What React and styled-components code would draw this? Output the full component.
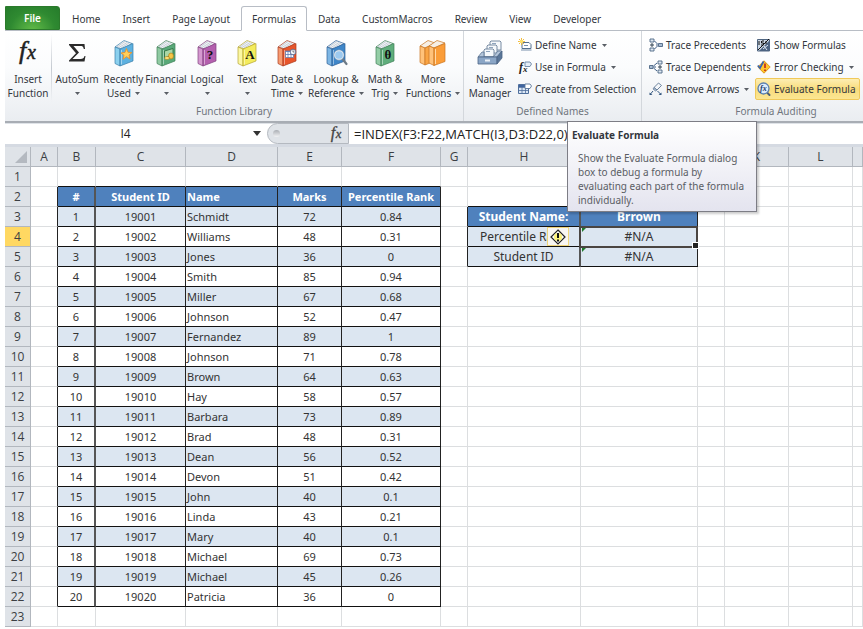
import React, { useState } from "react";
import styled, { createGlobalStyle } from "styled-components";

const TABS = [
  "Home",
  "Insert",
  "Page Layout",
  "Formulas",
  "Data",
  "CustomMacros",
  "Review",
  "View",
  "Developer",
];

const COLUMNS = [
  { name: "A", width: 27 },
  { name: "B", width: 38 },
  { name: "C", width: 90 },
  { name: "D", width: 92 },
  { name: "E", width: 64 },
  { name: "F", width: 99 },
  { name: "G", width: 27 },
  { name: "H", width: 113 },
  { name: "I", width: 117 },
  { name: "J", width: 27 },
  { name: "K", width: 64 },
  { name: "L", width: 64 },
  { name: "", width: null },
];

const STUDENTS = [
  ["Schmidt", 72, 0.84],
  ["Williams", 48, 0.31],
  ["Jones", 36, 0],
  ["Smith", 85, 0.94],
  ["Miller", 67, 0.68],
  ["Johnson", 52, 0.47],
  ["Fernandez", 89, 1],
  ["Johnson", 71, 0.78],
  ["Brown", 64, 0.63],
  ["Hay", 58, 0.57],
  ["Barbara", 73, 0.89],
  ["Brad", 48, 0.31],
  ["Dean", 56, 0.52],
  ["Devon", 51, 0.42],
  ["John", 40, 0.1],
  ["Linda", 43, 0.21],
  ["Mary", 40, 0.1],
  ["Michael", 69, 0.73],
  ["Michael", 45, 0.26],
  ["Patricia", 36, 0],
];

const ROW_COUNT = 23;

// cell values keyed by address
const CELLS = {
  B2: "#",
  C2: "Student ID",
  D2: "Name",
  E2: "Marks",
  F2: "Percentile Rank",
  H3: "Student Name:",
  I3: "Brrown",
  H4: "Percentile Rank",
  I4: "#N/A",
  H5: "Student ID",
  I5: "#N/A",
};
STUDENTS.forEach(([name, marks, rank], i) => {
  const row = i + 3;
  CELLS[`B${row}`] = i + 1;
  CELLS[`C${row}`] = 19001 + i;
  CELLS[`D${row}`] = name;
  CELLS[`E${row}`] = marks;
  CELLS[`F${row}`] = rank;
});

const inList = (col, row) => "BCDEF".includes(col) && row >= 2 && row <= 22;
const inLookup = (col, row) => "HI".includes(col) && row >= 3 && row <= 5;

const getCellStyle = (col, row) => {
  const list = col !== "" && inList(col, row);
  const lookup = col !== "" && inLookup(col, row);
  const head = (list && row === 2) || (lookup && row === 3);
  const band = (list && row % 2 === 1) || (lookup && row > 3);
  return {
    $fill: head ? "#4f81bd" : band ? "#dce6f1" : "#fff",
    $head: head,
    $large: lookup,
    $left: col === "D",
    $double: (col === "B" && list) || (col === "H" && lookup),
    $rightLine:
      list ||
      lookup ||
      (col === "A" && row >= 2 && row <= 22) ||
      (col === "G" && row >= 3 && row <= 5),
    $bottomLine:
      list ||
      lookup ||
      ("BCDEF".includes(col) && col !== "" && row === 1) ||
      ("HI".includes(col) && col !== "" && row === 2),
  };
};

/* ---------- icons ---------- */

const Book = ({ face, side, edge, children }) => (
  <svg width="24" height="28" viewBox="0 0 24 28" aria-hidden="true">
    <path d="M3 8 L12 1.5 L20 4.5 L10 10Z" fill="#f4f6f8" stroke={edge} strokeWidth=".7" />
    <path d="M5 8 L13 2.5 M7 8.5 L15 3.5 M9 9 L17 4" stroke="#aab6c2" strokeWidth=".6" />
    <path d="M3 8 L8 10 L8 27 L3 24.5Z" fill={side} stroke={edge} strokeWidth=".7" strokeLinejoin="round" />
    <path d="M8 10 L21 4.5 L21 22 L8 27Z" fill={face} stroke={edge} strokeWidth=".7" strokeLinejoin="round" />
    <path d="M9.5 11 L9.5 25.5" stroke="#fff" strokeOpacity=".5" strokeWidth=".9" />
    {children}
  </svg>
);

const BookLetter = ({ children }) => (
  <text x="15" y="20" fontSize="13" fontWeight="700" fontFamily="Liberation Serif, serif" textAnchor="middle" fill="#111">
    {children}
  </text>
);

const FxIcon = ({ size = 28, width = 30, color = "#222" }) => (
  <svg width={width} height={size} viewBox="0 0 30 28" aria-hidden="true">
    <text x="6" y="20" fontSize="26" fontStyle="italic" fontFamily="Liberation Serif, serif" fill={color} stroke={color} strokeWidth=".5">
      f
    </text>
    <text x="14" y="20" fontSize="20" fontStyle="italic" fontFamily="Liberation Serif, serif" fill={color} stroke={color} strokeWidth=".5">
      x
    </text>
  </svg>
);

const SigmaIcon = () => (
  <svg width="24" height="28" viewBox="0 0 24 28" aria-hidden="true">
    <path
      d="M4 5H19.500L20 10H18.800C18.300 7.500 17.500 7 15 7H8.500L14 13.500L7.500 20H15.500C18 20 18.800 19.200 19.500 17H20.500L19.500 22.500H4V21.500L11 14.200L4 6Z"
      fill="#2b2b2b"
    />
  </svg>
);

const RecentIcon = () => (
  <Book face="#5db1e0" side="#8bd0ee" edge="#3b7ea9">
    <path d="M14.500 9.500L16 13.300L20 13.500L17 16L18 20L14.500 17.700L11 20.200L12 16.200L9 14L13 13.400Z" fill="#ffcf5a" stroke="#e8922b" strokeWidth=".9" />
  </Book>
);

const FinancialIcon = () => (
  <Book face="#58a978" side="#8fcaa2" edge="#3f7f57">
    <path d="M10.500 12L19 9.500V16L10.500 19Z" fill="#a9d7a5" stroke="#2e7046" strokeWidth=".9" />
    <ellipse cx="17" cy="17" rx="2.500" ry="3" fill="#f6c546" stroke="#a87913" strokeWidth=".6" />
    <ellipse cx="13" cy="19" rx="2.500" ry="1.500" fill="#ffe07a" stroke="#a87913" strokeWidth=".5" />
  </Book>
);

const LogicalIcon = () => (
  <Book face="#b45fae" side="#d598cf" edge="#80417e">
    <BookLetter>?</BookLetter>
  </Book>
);

const TextIcon = () => (
  <Book face="#f4ec5c" side="#fbf7a3" edge="#b5a52e">
    <BookLetter>A</BookLetter>
  </Book>
);

const DateIcon = () => (
  <Book face="#e8552b" side="#f79b72" edge="#a93a1c">
    <path d="M10.500 12H18.500V18.500H10.500Z" fill="#fff" stroke="#6b7fa9" strokeWidth=".8" />
    <path d="M10.500 12.500H18.500M10.500 15.500H18.500M13 12V18.500M16 12V18.500" stroke="#5b78b5" strokeWidth=".8" />
    <circle cx="18" cy="13" r="2.800" fill="#f2f5fb" stroke="#4c5e86" strokeWidth=".8" />
    <path d="M18 11.300V13H19.500" stroke="#333" strokeWidth=".6" fill="none" />
  </Book>
);

const LookupIcon = () => (
  <Book face="#3e86c9" side="#7db6e4" edge="#2c5f95">
    <path d="M18.500 20L22.500 25" stroke="#6d7a86" strokeWidth="2.200" strokeLinecap="round" />
    <circle cx="15" cy="16" r="4.500" fill="#9cc9ef" stroke="#dfe9f2" strokeWidth="1.300" />
    <circle cx="15" cy="16" r="5.200" fill="none" stroke="#6f8ba6" strokeWidth=".5" />
  </Book>
);

const MathIcon = () => (
  <Book face="#5fae7c" side="#93cda6" edge="#3f7f57">
    <BookLetter>θ</BookLetter>
  </Book>
);

const MoreIcon = () => (
  <svg width="30" height="28" viewBox="0 0 30 28" aria-hidden="true">
    <g stroke="#c8741f" strokeWidth=".7" strokeLinejoin="round">
      <path d="M2 7L10 1.500L17 4L7 9Z" fill="#f6efe5" />
      <path d="M2 7L7 9V26L2 23.500Z" fill="#ffc27a" />
      <path d="M7 9L17 4.500V22L7 26Z" fill="#f9a443" />
      <path d="M11 7L19 1.500L27 4L16 9Z" fill="#f6efe5" />
      <path d="M11 7L16 9V26.500L11 24Z" fill="#ffc27a" />
      <path d="M16 9L27 4.500V22.500L16 26.500Z" fill="#fb9d38" />
    </g>
    <path d="M17.500 10V25" stroke="#ffd9a8" />
  </svg>
);

const NameManagerIcon = () => (
  <svg width="26" height="28" viewBox="0 0 26 28" aria-hidden="true">
    <g fill="#f5f8fb" stroke="#6a7f99" strokeWidth=".9" strokeLinejoin="round">
      <path d="M13 3L14 2H23L24 3V11H13Z" />
      <path d="M10 7L11 6H19L20 7V14H10Z" />
      <path d="M7 11L8 10H16L17 11V18H7Z" />
    </g>
    <path d="M15 4.500H19M12 8.500H16M9 12.500H13" stroke="#8ea4bd" />
    <path d="M1 18L5 13H7V18H16L21 12H25L20 18Z" fill="#b3c5da" stroke="#5c7593" strokeWidth=".8" />
    <path d="M1 18H20V25H1Z" fill="#8ba6c6" stroke="#4b6585" strokeWidth=".8" />
    <path d="M20 18L25 12V19L20 25Z" fill="#5a7698" stroke="#4b6585" strokeWidth=".8" />
    <path d="M8 20.500H13V22.500H8Z" fill="#eaf0f7" />
  </svg>
);

const SmallSvg = ({ children }) => (
  <svg width="14" height="14" viewBox="0 0 14 14" fill="none" aria-hidden="true">
    {children}
  </svg>
);

const DefineNameIcon = () => (
  <SmallSvg>
    <path d="M4 4.500H11L13 6.500V10.500H4Z" fill="#fff" stroke="#55708f" />
    <path d="M6 7.500H10M3 12H13.500" stroke="#7890ab" />
    <path d="M3.500 0V7M0 3.500H7M1 1L6 6M6 1L1 6" stroke="#f0b429" strokeWidth=".9" />
    <circle cx="3.500" cy="3.500" r="1.800" fill="#ffe16b" />
  </SmallSvg>
);

const UseFormulaIcon = () => (
  <SmallSvg>
    <path d="M7 2H12L13.500 4L12 6.500H7Z" fill="#e4edf6" stroke="#6b84a3" strokeWidth=".9" />
    <text x="1" y="11" fontSize="12" fontStyle="italic" fontWeight="700" fontFamily="Liberation Serif, serif" fill="#222">
      f
    </text>
    <text x="5" y="12" fontSize="9" fontStyle="italic" fontWeight="700" fontFamily="Liberation Serif, serif" fill="#222">
      x
    </text>
  </SmallSvg>
);

const CreateIcon = () => (
  <SmallSvg>
    <path d="M.5 2.500H10.500V11.500H.5Z" fill="#dbe7f5" stroke="#4f6f9c" />
    <path d="M.5 5.500H10.500M.5 8.500H10.500M4 2.500V11.500M7.500 2.500V11.500" stroke="#4f6f9c" strokeWidth=".8" />
    <path d="M1 3H9V5H1Z" fill="#3e64a0" />
    <path d="M7 2H12L13.500 4L12 6.500H7Z" fill="#fff" stroke="#5a7699" strokeWidth=".9" />
  </SmallSvg>
);

const PrecedentsIcon = () => (
  <SmallSvg>
    <path d="M1 1H5V4H1ZM1 10H5V13H1Z" fill="#dfe8f2" stroke="#4d6785" strokeWidth=".9" />
    <path d="M3 5V9M1 7H5" stroke="#345" />
    <path d="M5.500 3L8.500 6M5.500 11L8.500 8M7 7H9" stroke="#3f5f86" />
    <path d="M9.500 5.500H13.500V8.500H9.500Z" fill="#a9bdd3" stroke="#4d6785" strokeWidth=".9" />
  </SmallSvg>
);

const DependentsIcon = () => (
  <SmallSvg>
    <path d="M.5 5.500H4V8.500H.5Z" fill="#a9bdd3" stroke="#4d6785" strokeWidth=".9" />
    <path d="M4.500 6L8 3M4.500 8L8 11M4.500 7H7" stroke="#3f5f86" />
    <path d="M9 1H13V4H9ZM9 10H13V13H9Z" fill="#dfe8f2" stroke="#4d6785" strokeWidth=".9" />
    <path d="M11 5V9M9 7H13" stroke="#345" />
  </SmallSvg>
);

const RemoveArrowsIcon = () => (
  <SmallSvg>
    <path d="M5 5.500L9.500 1L12.500 3.500L8 8Z" fill="#f3f6fa" stroke="#5e7692" strokeWidth=".9" />
    <path d="M5 5.500L8 8L6.500 9L4 7Z" fill="#a9bdd3" stroke="#5e7692" strokeWidth=".7" />
    <path d="M4 9L1.500 12M8.500 9L11.500 12" stroke="#33567f" />
    <path d="M.5 10.500V13H3.500ZM12.500 10.500V13H9.500Z" fill="#33567f" />
  </SmallSvg>
);

const ShowFormulasIcon = () => (
  <SmallSvg>
    <path d="M.5 1.500H12.500V13H.5Z" fill="#cbd7e4" stroke="#4f6580" />
    <path d="M13 2V13H2Z" fill="#4d6482" />
    <path d="M2 3V7M5 3H7M4.500 3V5H6.500V7H4M9 3V6M1 12L12 1" stroke="#111" strokeWidth="1" />
    <path d="M6 11L11 7M7 8L10 12" stroke="#dfe8f2" strokeWidth="1" />
  </SmallSvg>
);

const ErrorIcon = () => (
  <SmallSvg>
    <path d="M7 .8L13.200 7L7 13.200L.8 7Z" fill="#ffc62b" stroke="#d98e12" strokeWidth=".9" />
    <path d="M8 3.500V8M8 9.500V11" stroke="#c5351c" strokeWidth="1.800" />
    <path d="M.8 5.500L3 8L6.500 1.500" stroke="#3363b5" strokeWidth="1.600" />
  </SmallSvg>
);

const EvaluateIcon = () => (
  <SmallSvg>
    <path d="M9.500 10L12.500 13" stroke="#4f5f73" strokeWidth="2" strokeLinecap="round" />
    <circle cx="6.500" cy="6.500" r="5.500" fill="#dcebfb" stroke="#5b7fae" strokeWidth="1.300" />
    <text x="3" y="9" fontSize="8" fontStyle="italic" fontWeight="700" fontFamily="Liberation Serif, serif" fill="#223a66">
      fx
    </text>
  </SmallSvg>
);

const Caret = () => (
  <svg width="5" height="3" viewBox="0 0 5 3" aria-hidden="true">
    <path d="M0 0H5L2.500 3Z" fill="#5a5f66" />
  </svg>
);

/* ---------- ribbon ---------- */

const LIBRARY = [
  { lines: ["AutoSum"], icon: SigmaIcon, width: 50 },
  { lines: ["Recently", "Used"], icon: RecentIcon, width: 43 },
  { lines: ["Financial"], icon: FinancialIcon, width: 42 },
  { lines: ["Logical"], icon: LogicalIcon, width: 40 },
  { lines: ["Text"], icon: TextIcon, width: 40 },
  { lines: ["Date &", "Time"], icon: DateIcon, width: 40 },
  { lines: ["Lookup &", "Reference"], icon: LookupIcon, width: 58 },
  { lines: ["Math &", "Trig"], icon: MathIcon, width: 40 },
  { lines: ["More", "Functions"], icon: MoreIcon, width: 56 },
];

const BigButton = ({ lines, icon: Icon, width, menu = true }) => (
  <BigButtonBox type="button" $width={width}>
    <BigIcon>
      <Icon />
    </BigIcon>
    <Line>{lines[0]}</Line>
    <Line>
      {lines[1]}
      {menu && <Caret />}
    </Line>
  </BigButtonBox>
);

const SmallButton = ({ icon: Icon, children, menu, active }) => (
  <SmallButtonBox type="button" $active={active}>
    <Icon />
    <SmallLabel>{children}</SmallLabel>
    {menu && <Caret />}
  </SmallButtonBox>
);

const Ribbon = () => (
  <RibbonBox>
    <Group $width={459}>
      <GroupBody>
        <BigButton lines={["Insert", "Function"]} icon={FxIcon} width={46} menu={false} />
        <Divider />
        {LIBRARY.map((item) => (
          <BigButton key={item.lines[0]} {...item} />
        ))}
      </GroupBody>
      <GroupName>Function Library</GroupName>
    </Group>
    <Group $width={178}>
      <GroupBody>
        <BigButton lines={["Name", "Manager"]} icon={NameManagerIcon} width={52} menu={false} />
        <Stack>
          <SmallButton icon={DefineNameIcon} menu>
            Define Name
          </SmallButton>
          <SmallButton icon={UseFormulaIcon} menu>
            Use in Formula
          </SmallButton>
          <SmallButton icon={CreateIcon}>Create from Selection</SmallButton>
        </Stack>
      </GroupBody>
      <GroupName>Defined Names</GroupName>
    </Group>
    <Group $grow>
      <GroupBody $inset>
        <Stack $width={108}>
          <SmallButton icon={PrecedentsIcon}>Trace Precedents</SmallButton>
          <SmallButton icon={DependentsIcon}>Trace Dependents</SmallButton>
          <SmallButton icon={RemoveArrowsIcon} menu>
            Remove Arrows
          </SmallButton>
        </Stack>
        <Stack>
          <SmallButton icon={ShowFormulasIcon}>Show Formulas</SmallButton>
          <SmallButton icon={ErrorIcon} menu>
            Error Checking
          </SmallButton>
          <TipAnchor>
            <SmallButton icon={EvaluateIcon} active>
              Evaluate Formula
            </SmallButton>
            <Tooltip role="tooltip">
              <TipTitle>Evaluate Formula</TipTitle>
              <TipText>
                Show the Evaluate Formula dialog box to debug a formula by
                evaluating each part of the formula individually.
              </TipText>
            </Tooltip>
          </TipAnchor>
        </Stack>
      </GroupBody>
      <GroupName $shift>Formula Auditing</GroupName>
    </Group>
  </RibbonBox>
);

/* ---------- formula bar and sheet ---------- */

const FormulaBar = () => {
  const [name, setName] = useState("I4");
  const [formula, setFormula] = useState("=INDEX(F3:F22,MATCH(I3,D3:D22,0))");

  return (
    <BarBox>
      <NameInput aria-label="Name box" value={name} onChange={(e) => setName(e.target.value)} />
      <NameArrow type="button" aria-label="Name list">
        <svg width="8" height="5" viewBox="0 0 8 5" aria-hidden="true">
          <path d="M0 0H8L4 5Z" fill="#333" />
        </svg>
      </NameArrow>
      <Pill>
        <Knob />
        <FxButton type="button" aria-label="Insert function">
          <FxIcon size={18} width={19} color="#444" />
        </FxButton>
      </Pill>
      <FormulaInput aria-label="Formula" value={formula} onChange={(e) => setFormula(e.target.value)} />
    </BarBox>
  );
};

const Sheet = () => {
  const rows = Array.from({ length: ROW_COUNT }, (_, i) => i + 1);

  return (
    <Table>
      <colgroup>
        <Col $width={26} />
        {COLUMNS.map((col, i) => (
          <Col key={i} $width={col.width} />
        ))}
      </colgroup>
      <thead>
        <tr>
          <Corner>
            <svg width="12" height="12" viewBox="0 0 12 12" aria-hidden="true">
              <path d="M12 0V12H0Z" fill="#b4b9c0" />
            </svg>
          </Corner>
          {COLUMNS.map((col, i) => (
            <HeadCell key={i} scope="col" $active={col.name === "I"}>
              {col.name}
            </HeadCell>
          ))}
        </tr>
      </thead>
      <tbody>
        {rows.map((row) => (
          <tr key={row}>
            <HeadCell scope="row" $active={row === 4}>
              {row}
            </HeadCell>
            {COLUMNS.map((col, i) => {
              const address = `${col.name}${row}`;
              return (
                <Cell key={i} {...getCellStyle(col.name, row)}>
                  {col.name !== "" && CELLS[address]}
                  {(address === "I4" || address === "I5") && <ErrorMark />}
                  {address === "I4" && <Selection />}
                  {address === "H4" && (
                    <ErrorButton type="button" aria-label="Error options">
                      <svg width="16" height="16" viewBox="0 0 16 16" aria-hidden="true">
                        <path d="M8 1L15 8L8 15L1 8Z" fill="#fff" stroke="#222" strokeWidth="1.200" />
                        <circle cx="8" cy="8" r="4" fill="#fbf37a" />
                        <path d="M8 4V9M8 10.500V12.500" stroke="#111" strokeWidth="2" />
                      </svg>
                    </ErrorButton>
                  )}
                </Cell>
              );
            })}
          </tr>
        ))}
      </tbody>
    </Table>
  );
};

const App = () => {
  const [activeTab, setActiveTab] = useState("Formulas");

  return (
    <Window>
      <GlobalStyle />
      <TabBar>
        <FileTab type="button">File</FileTab>
        {TABS.map((tab) => (
          <Tab key={tab} type="button" $active={tab === activeTab} onClick={() => setActiveTab(tab)}>
            {tab}
          </Tab>
        ))}
      </TabBar>
      <Ribbon />
      <FormulaBar />
      <Sheet />
    </Window>
  );
};

const GlobalStyle = createGlobalStyle`
  * {
    box-sizing: border-box;
  }
  body {
    margin: 0;
    background: #fff;
    font-family: "Noto Sans", "Open Sans", sans-serif;
    font-size: 10px;
    color: #33373d;
  }
  button,
  input {
    font: inherit;
    color: inherit;
    border: 0;
    padding: 0;
    background: none;
  }
  svg {
    flex: none;
    overflow: visible;
  }
`;

const Window = styled.main`
  padding: 6px 0 0 5px;
  overflow: hidden;
`;

const TabBar = styled.nav`
  display: flex;
  height: 25px;
  border-bottom: 1px solid #b8bdc5;
`;

const Tab = styled.button`
  height: 25px;
  padding: 0 10px;
  border: 1px solid transparent;
  border-radius: 3px 3px 0 0;
  white-space: nowrap;
  ${(props) =>
    props.$active &&
    `
    background: #fff;
    border-color: #b8bdc5 #b8bdc5 #fff;
  `}
`;

const FileTab = styled.button`
  width: 55px;
  height: 24px;
  margin-right: 1px;
  border: 1px solid #2b7a2b;
  border-radius: 0 3px 0 0;
  background: radial-gradient(ellipse at 50% 110%, #63bd49 0%, #2f8a31 60%, #257c2b 100%);
  color: #fff;
  font-weight: 600;
`;

const RibbonBox = styled.section`
  display: flex;
  height: 92px;
  border-bottom: 2px solid #a8adb4;
  background: linear-gradient(#fff, #fbfcfd 40%, #eaedf1);
  box-shadow: 0 1px 0 #dfe3e8;
`;

const Group = styled.div`
  display: flex;
  flex-direction: column;
  flex: ${(props) => (props.$grow ? "1 0 0" : `0 0 ${props.$width}px`)};
  padding-top: 3px;
  border-right: 1px solid ${(props) => (props.$grow ? "transparent" : "#d3d7dc")};
`;

const GroupBody = styled.div`
  display: flex;
  height: 68px;
  padding-left: ${(props) => (props.$inset ? "5px" : "0")};
`;

const GroupName = styled.div`
  height: 18px;
  line-height: 18px;
  text-align: center;
  color: #70767e;
  padding-left: ${(props) => (props.$shift ? "48px" : "0")};
`;

const Divider = styled.div`
  width: 1px;
  background: linear-gradient(transparent, #c5cad1, transparent);
`;

const BigButtonBox = styled.button`
  flex: 0 0 ${(props) => props.$width}px;
  display: flex;
  flex-direction: column;
  align-items: center;
`;

const BigIcon = styled.span`
  height: 38px;
  display: flex;
  align-items: center;
`;

const Line = styled.span`
  display: flex;
  align-items: center;
  justify-content: center;
  gap: 4px;
  height: 14px;
  line-height: 14px;
  white-space: nowrap;
`;

const Stack = styled.div`
  display: flex;
  flex-direction: column;
  flex: none;
  width: ${(props) => (props.$width ? `${props.$width}px` : "auto")};
`;

const SmallButtonBox = styled.button`
  display: flex;
  align-items: center;
  gap: 3px;
  height: 22px;
  padding: 0 1px;
  border: 1px solid ${(props) => (props.$active ? "#f0c95a" : "transparent")};
  border-radius: 2px;
  background: ${(props) => (props.$active ? "linear-gradient(#fdeeb3, #f9dc7c 50%, #fbe692)" : "none")};
  white-space: nowrap;
`;

const SmallLabel = styled.span`
  padding-right: 2px;
`;

const TipAnchor = styled.div`
  position: relative;
`;

const Tooltip = styled.div`
  position: absolute;
  top: 43px;
  right: calc(100% - 2px);
  z-index: 2;
  width: 190px;
  height: 91px;
  padding: 5px 4px;
  border: 1px solid #7d7d85;
  background: linear-gradient(#fff, #e4e4ef);
  box-shadow: 2px 2px 2px rgba(0, 0, 0, 0.2);
  line-height: 14px;
`;

const TipTitle = styled.div`
  font-weight: 700;
  line-height: 16px;
`;

const TipText = styled.div`
  padding: 8px 0 0 6px;
  color: #5a5d64;
`;

const BarBox = styled.div`
  display: flex;
  height: 24px;
  border-bottom: 3px solid #d5dae2;
  font-family: "Open Sans", sans-serif;
  font-size: 13px;
  color: #222;
`;

const NameInput = styled.input`
  width: 241px;
  text-align: center;
  font-size: 12px;
`;

const NameArrow = styled.button`
  display: flex;
  align-items: center;
  justify-content: center;
  width: 21px;
`;

const Pill = styled.div`
  display: flex;
  align-items: center;
  justify-content: space-between;
  width: 82px;
  padding: 0 2px 0 5px;
  border: 1px solid #b4b9c0;
  border-radius: 11px 0 0 11px;
  background: #dfe3e8;
`;

const Knob = styled.span`
  width: 7px;
  height: 7px;
  border-radius: 50%;
  background: linear-gradient(#a9adb3, #f2f3f5);
`;

const FxButton = styled.button`
  display: flex;
`;

const FormulaInput = styled.input`
  flex: 1;
  min-width: 0;
  padding-left: 5px;
`;

const Table = styled.table`
  width: 100%;
  table-layout: fixed;
  border-collapse: separate;
  border-spacing: 0;
  line-height: 14px;
`;

const Col = styled.col`
  width: ${(props) => (props.$width ? `${props.$width}px` : "auto")};
`;

const HeadCell = styled.th`
  height: 20px;
  padding: 0;
  border-right: 1px solid #b2b7be;
  border-bottom: 1px solid #b2b7be;
  background: ${(props) => (props.$active ? "#ffd862" : "#dfe3e8")};
  font-family: "Open Sans", sans-serif;
  font-size: 12px;
  font-weight: 400;
  color: #3b3e43;
`;

const Corner = styled(HeadCell)`
  padding-right: 3px;

  svg {
    display: block;
    margin-left: auto;
  }
`;

const Cell = styled.td`
  position: relative;
  height: 20px;
  padding: 0 1px;
  background: ${(props) => props.$fill};
  border-right: ${(props) => (props.$double ? "2px solid #555" : `1px solid ${props.$rightLine ? "#222" : "#dcdee0"}`)};
  border-bottom: 1px solid ${(props) => (props.$bottomLine ? "#111" : "#dcdee0")};
  text-align: ${(props) => (props.$left ? "left" : "center")};
  font-size: ${(props) => (props.$large ? "12px" : "11px")};
  font-weight: ${(props) => (props.$head ? 700 : 400)};
  color: ${(props) => (props.$head ? "#fff" : "#333")};
  white-space: nowrap;
`;

const ErrorMark = styled.span`
  position: absolute;
  left: 1px;
  top: 0;
  border-top: 5px solid #1c7a2c;
  border-right: 5px solid transparent;
`;

const Selection = styled.span`
  position: absolute;
  inset: -1px -1px -2px -2px;
  z-index: 1;
  border: 2px solid #4a4542;

  &::after {
    content: "";
    position: absolute;
    right: -3px;
    bottom: -3px;
    width: 5px;
    height: 5px;
    border: 1px solid #fff;
    background: #222;
  }
`;

const ErrorButton = styled.button`
  position: absolute;
  right: 10px;
  top: 0;
  z-index: 1;
  display: flex;
  align-items: center;
  justify-content: center;
  width: 22px;
  height: 19px;
  border: 1px solid #efd67a;
  background: #f8f6f2;
`;

export default App;
